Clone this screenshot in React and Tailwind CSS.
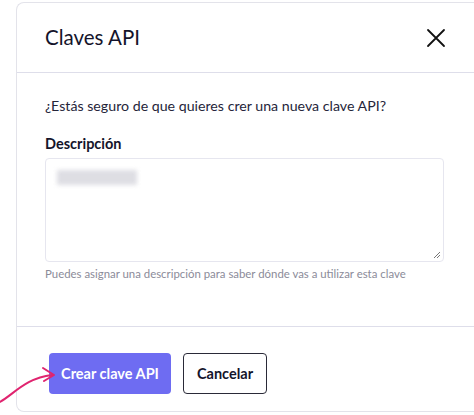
import React from 'react';

const font = { fontFamily: 'Lato, "Noto Sans", sans-serif' };

const CloseIcon = () => (
  <svg width="20" height="20" viewBox="0 0 20 20" fill="none" stroke="#111" strokeWidth="1.8" strokeLinecap="round">
    <path d="M2 2 L18 18 M18 2 L2 18" />
  </svg>
);

const Arrow = () => (
  <svg className="absolute left-0 top-[360px] pointer-events-none" width="70" height="50" viewBox="0 0 70 50" fill="none" stroke="#e0246f" strokeWidth="2" strokeLinecap="round" strokeLinejoin="round">
    <path d="M0 42 C 14 34, 26 18, 52 15" />
    <path d="M43 8 L54 15 L44 21" />
  </svg>
);

export default function App() {
  return (
    <div className="relative w-[474px] h-[415px] bg-white overflow-hidden" style={font}>
      <div className="ml-[16px] mt-[2px] w-[480px] h-[410px] flex flex-col rounded-l-lg border-l border-t border-b border-[#e3e3ea] bg-white">
        {/* Header */}
        <div className="h-[70px] flex items-center justify-between pl-[28px] pr-[50px] border-b border-[#dedeea] shrink-0">
          <h2 className="text-[20.5px] text-[#14142b]">Claves API</h2>
          <button><CloseIcon /></button>
        </div>

        {/* Body */}
        <div className="flex-1 pl-[28px] pr-[46px] pt-[22px] flex flex-col">
          <p className="text-[14.2px] text-[#25253a] leading-[22px]">¿Estás seguro de que quieres crer una nueva clave API?</p>
          <label className="mt-[16px] text-[14.5px] font-bold text-[#14142b] leading-[22px]">Descripción</label>
          <div className="mt-[3px] w-[399px] h-[104px] border border-[#e6e6ef] rounded-sm relative">
            <div className="absolute left-[11px] top-[11px] w-[80px] h-[15px] bg-[#d6d6dd] blur-[2px] opacity-80" />
            <svg className="absolute right-[2px] bottom-[2px]" width="8" height="8" viewBox="0 0 8 8" stroke="#777" strokeWidth="1">
              <path d="M1 7 L7 1 M4 7 L7 4" />
            </svg>
          </div>
          <p className="mt-[3px] text-[11.4px] text-[#8b8b99] leading-[18px] whitespace-nowrap">Puedes asignar una descripción para saber dónde vas a utilizar esta clave</p>
        </div>

        {/* Footer */}
        <div className="h-[85px] border-t border-[#dedeea] shrink-0 flex items-start gap-[12px] pl-[32px] pt-[26px]">
          <button className="h-[41px] w-[122px] rounded-[4px] bg-[#6e6cf2] text-white text-[14.5px] font-bold">Crear clave API</button>
          <button className="h-[41px] w-[84px] rounded-[4px] border border-[#2a2a38] text-[#14142b] text-[14.5px] font-bold">Cancelar</button>
        </div>
      </div>
      <Arrow />
    </div>
  );
}
